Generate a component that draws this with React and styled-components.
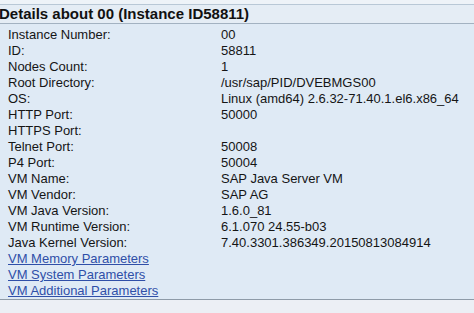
import React from 'react';
import styled, { createGlobalStyle } from 'styled-components';

const GlobalStyle = createGlobalStyle`
  html, body {
    margin: 0;
    padding: 0;
    background: #eceff5;
    font-family: "Liberation Sans", Arial, sans-serif;
  }
`;

const rows = [
  ['Instance Number:', '00'],
  ['ID:', '58811'],
  ['Nodes Count:', '1'],
  ['Root Directory:', '/usr/sap/PID/DVEBMGS00'],
  ['OS:', 'Linux (amd64) 2.6.32-71.40.1.el6.x86_64'],
  ['HTTP Port:', '50000'],
  ['HTTPS Port:', ''],
  ['Telnet Port:', '50008'],
  ['P4 Port:', '50004'],
  ['VM Name:', 'SAP Java Server VM'],
  ['VM Vendor:', 'SAP AG'],
  ['VM Java Version:', '1.6.0_81'],
  ['VM Runtime Version:', '6.1.070 24.55-b03'],
  ['Java Kernel Version:', '7.40.3301.386349.20150813084914'],
];

const links = ['VM Memory Parameters', 'VM System Parameters', 'VM Additional Parameters'];

const App = () => {
  return (
    <Page>
      <GlobalStyle />
      <TopStrip />
      <Header>Details about 00 (Instance ID58811)</Header>
      <Body>
        <Grid>
          {rows.map(([label, value]) => (
            <React.Fragment key={label}>
              <Label>{label}</Label>
              <Value>{value}</Value>
            </React.Fragment>
          ))}
        </Grid>
        {links.map((l) => (
          <Link key={l} href="#">{l}</Link>
        ))}
      </Body>
      <Footer />
    </Page>
  );
};

const Page = styled.div`
  width: 474px;
  height: 313px;
  overflow: hidden;
  display: flex;
  flex-direction: column;
  background: #eceff5;
`;

const TopStrip = styled.div`
  height: 4px;
  background: #eef3f8;
  border-bottom: 1px solid #b9c8d6;
`;

const Header = styled.div`
  height: 18px;
  line-height: 18px;
  font-size: 15px;
  font-weight: bold;
  color: #111;
  background: #e5edf5;
  border-bottom: 1px solid #a3b2c1;
  white-space: nowrap;
  text-indent: -1px;
`;

const Body = styled.div`
  background: #dfeaf5;
  padding: 3px 0 0 8px;
  border-bottom: 1px solid #8e9ba8;
  display: flex;
  flex-direction: column;
`;

const Grid = styled.div`
  display: grid;
  grid-template-columns: 213px 1fr;
  grid-auto-rows: 16px;
`;

const Label = styled.div`
  font-size: 13px;
  line-height: 16px;
  color: #151515;
  white-space: nowrap;
`;

const Value = styled(Label)``;

const Link = styled.a`
  font-size: 13px;
  line-height: 16px;
  color: #2f4fa8;
  text-decoration: underline;
  align-self: flex-start;
`;

const Footer = styled.div`
  flex: 1;
  background: #eceff5;
`;

export default App;
